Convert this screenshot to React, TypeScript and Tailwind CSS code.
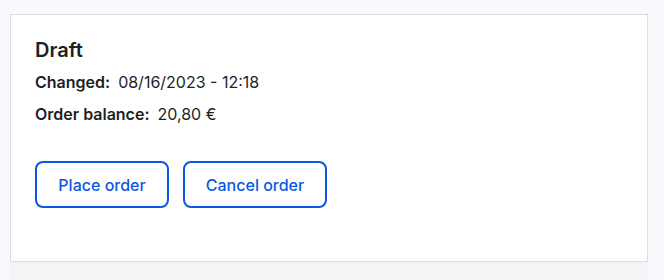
export default function App() {
  return (
    <div className="min-h-[280px] bg-[#f8f9fd] pt-[14px] px-[16px] pl-[10px]" style={{ fontFamily: 'Inter, "Noto Sans", sans-serif' }}>
      <div className="w-[638px]">
        <div className="bg-white border border-[#dcdde3] h-[248px] px-[24px] pt-[21px]">
          <h2 className="text-[20px] font-semibold leading-[28px] text-[#1d1f24]">Draft</h2>
          <div className="mt-[2px] flex gap-[8px] text-[16px] leading-[32px] text-[#1d1f24]">
            <span className="font-semibold">Changed:</span>
            <span>08/16/2023 - 12:18</span>
          </div>
          <div className="flex gap-[8px] text-[16px] leading-[32px] text-[#1d1f24]">
            <span className="font-semibold">Order balance:</span>
            <span>20,80 €</span>
          </div>
          <div className="mt-[31px] flex gap-[14px]">
            <button className="h-[47px] w-[134px] rounded-[8px] border-2 border-[#0b57e3] text-[16px] font-medium text-[#0b57e3]">
              Place order
            </button>
            <button className="h-[47px] w-[144px] rounded-[8px] border-2 border-[#0b57e3] text-[16px] font-medium text-[#0b57e3]">
              Cancel order
            </button>
          </div>
        </div>
        <div className="h-[18px] bg-[#f3f4f6]" />
      </div>
    </div>
  )
}
